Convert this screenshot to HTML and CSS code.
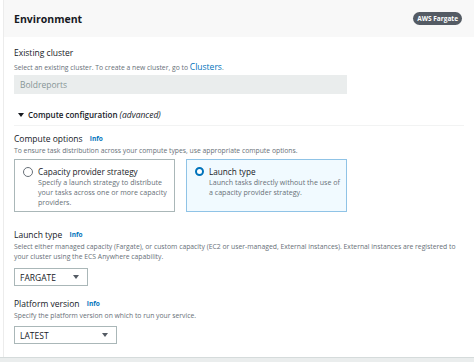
FILE: index.html
```html
<!DOCTYPE html>
<html lang="en">
<head>
  <meta charset="UTF-8">
  <meta name="viewport" content="width=device-width, initial-scale=1.0">
  <title>Environment</title>
  <link rel="stylesheet" href="styles.css">
</head>
<body>
  <div class="panel">
    <div class="panel-header">
      <h2>Environment</h2>
      <span class="badge">AWS Fargate</span>
    </div>
    <div class="panel-body">
      <div class="field field-cluster">
        <div class="label">Existing cluster</div>
        <div class="desc">Select an existing cluster. To create a new cluster, go to <a href="#" class="link">Clusters</a>.</div>
        <div class="input-disabled">Boldreports</div>
      </div>

      <div class="expander">
        <span class="caret"></span>
        <span class="expander-title">Compute configuration <em>(advanced)</em></span>
      </div>

      <div class="field field-compute">
        <div class="label">Compute options <span class="info">Info</span></div>
        <div class="desc">To ensure task distribution across your compute types, use appropriate compute options.</div>
        <div class="tiles">
          <div class="tile">
            <span class="radio"></span>
            <div>
              <div class="tile-title">Capacity provider strategy</div>
              <div class="tile-desc">Specify a launch strategy to distribute your tasks across one or more capacity providers.</div>
            </div>
          </div>
          <div class="tile selected">
            <span class="radio checked"></span>
            <div>
              <div class="tile-title">Launch type</div>
              <div class="tile-desc">Launch tasks directly without the use of a capacity provider strategy.</div>
            </div>
          </div>
        </div>
      </div>

      <div class="field field-launch">
        <div class="label">Launch type <span class="info">Info</span></div>
        <div class="desc">Select either managed capacity (Fargate), or custom capacity (EC2 or user-managed, External instances). External instances are registered to your cluster using the ECS Anywhere capability.</div>
        <div class="select select-small">FARGATE <span class="arrow"></span></div>
      </div>

      <div class="field field-platform">
        <div class="label">Platform version <span class="info">Info</span></div>
        <div class="desc">Specify the platform version on which to run your service.</div>
        <div class="select select-wide">LATEST <span class="arrow"></span></div>
      </div>
    </div>
  </div>
  <div class="page-bottom"></div>
</body>
</html>
```

FILE: styles.css
```css
body {
  margin: 0;
  font-family: 'Open Sans', 'Liberation Sans', sans-serif;
  color: #16191f;
  background-color: #fff;
  overflow: hidden;
}
.panel {
  margin-left: 3px;
  border-left: 1px solid #ececec;
  height: 357px;
  box-sizing: border-box;
}
.panel-header {
  height: 37px;
  background-color: #f8f8f8;
  display: flex;
  align-items: center;
  justify-content: space-between;
  padding: 0 12px 0 10px;
}
.panel-header h2 {
  margin: 0;
  font-size: 10.5px;
  font-weight: 700;
}
.badge {
  background-color: #545b64;
  color: #fff;
  font-size: 6.5px;
  font-weight: 700;
  padding: 2px 4px;
  border-radius: 8px;
  line-height: 9px;
}
.panel-body {
  padding: 10px 10px 0 10px;
}
.label {
  font-size: 8.5px;
  line-height: 12px;
}
.info {
  color: #0073bb;
  font-size: 6.5px;
  font-weight: 700;
  margin-left: 5px;
  vertical-align: 1px;
}
.desc {
  font-size: 6.8px;
  line-height: 10px;
  color: #687078;
}
.link {
  color: #0073bb;
  font-size: 8.5px;
  text-decoration: none;
}
.field-cluster .desc {
  margin-top: 3px;
}
.input-disabled {
  margin-top: 2px;
  width: 333px;
  height: 19px;
  box-sizing: border-box;
  background-color: #eaeded;
  color: #879596;
  font-size: 8.5px;
  line-height: 19px;
  padding-left: 6px;
}
.expander {
  margin-top: 15px;
  display: flex;
  align-items: center;
  font-size: 8px;
  font-weight: 600;
  padding: 0 0 5px 4px;
  border-bottom: 1px solid #f2f3f3;
}
.caret {
  width: 0;
  height: 0;
  border-left: 3px solid transparent;
  border-right: 3px solid transparent;
  border-top: 4px solid #16191f;
  margin-right: 4px;
}
.expander-title em {
  font-weight: 400;
  font-size: 8.5px;
}
.field-compute {
  margin-top: 7px;
}
.field-compute .desc {
  margin-top: 1px;
}
.tiles {
  display: flex;
  gap: 11px;
  margin-top: 3px;
}
.tile {
  width: 161px;
  height: 53px;
  box-sizing: border-box;
  border: 1px solid #aab7b8;
  display: flex;
  gap: 5px;
  padding: 6px 2px 0 8px;
}
.tile.selected {
  background-color: #f1faff;
  border-color: #8fc3e6;
}
.radio {
  flex: none;
  width: 8px;
  height: 8px;
  border: 1px solid #687078;
  border-radius: 50%;
  margin-top: 1px;
  background-color: #fff;
}
.radio.checked {
  border: 2.5px solid #0073bb;
  width: 5px;
  height: 5px;
}
.tile-title {
  font-size: 8.2px;
  line-height: 11px;
}
.tile-desc {
  font-size: 7.1px;
  line-height: 10px;
  color: #687078;
}
.field-launch {
  margin-top: 17px;
}
.field-launch .desc {
  margin-top: 1px;
}
.select {
  margin-top: 6px;
  height: 18px;
  box-sizing: border-box;
  border: 1px solid #aab7b8;
  display: flex;
  align-items: center;
  justify-content: space-between;
  font-size: 8.5px;
  padding: 0 8px 0 5px;
  background-color: #fff;
}
.select-small {
  width: 74px;
}
.select-wide {
  width: 103px;
}
.arrow {
  width: 0;
  height: 0;
  border-left: 3px solid transparent;
  border-right: 3px solid transparent;
  border-top: 4px solid #545b64;
}
.field-platform {
  margin-top: 12px;
}
.field-platform .desc {
  margin-top: 1px;
}
.field-platform .select {
  margin-top: 5px;
}
.page-bottom {
  height: 5px;
  border-top: 1px solid #d5dbdb;
  background-color: #eaeded;
}
```
